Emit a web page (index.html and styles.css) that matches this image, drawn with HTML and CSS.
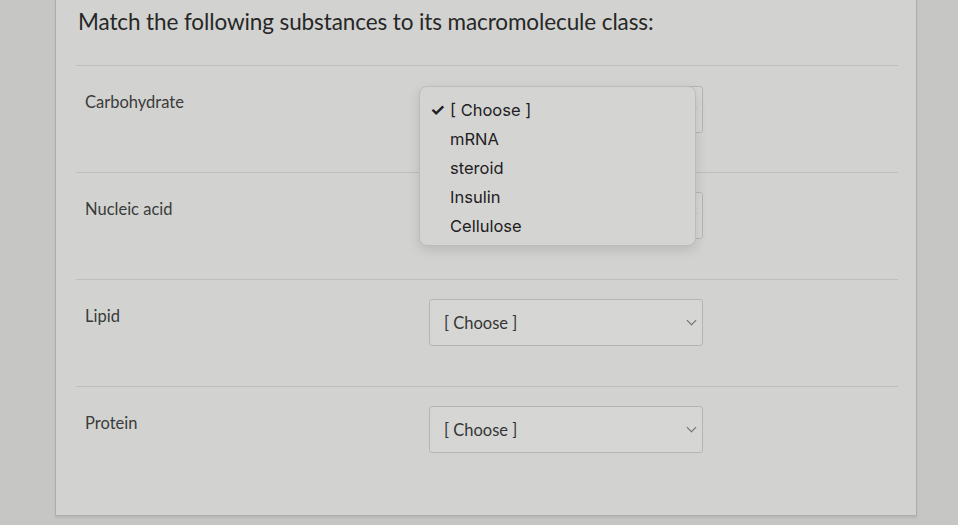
FILE: index.html
```html
<!DOCTYPE html>
<html lang="en">
<head>
    <meta charset="UTF-8">
    <meta name="viewport" content="width=device-width, initial-scale=1.0">
    <title>Matching question</title>
    <link rel="stylesheet" href="styles.css">
</head>
<body>
    <div class="page">
        <div class="question-card">
            <p class="question-text">Match the following substances to its macromolecule class:</p>

            <div class="answers">
                <div class="answer-row first-row">
                    <div class="answer-label">Carbohydrate</div>
                    <div class="answer-select"><span></span><span class="chevron"></span></div>

                    <!-- open list of the first select, drawn over the rows below -->
                    <ul class="dropdown-menu">
                        <li class="selected"><span class="check">✓</span>[ Choose ]</li>
                        <li>mRNA</li>
                        <li>steroid</li>
                        <li>Insulin</li>
                        <li>Cellulose</li>
                    </ul>
                </div>

                <div class="answer-row">
                    <div class="answer-label">Nucleic acid</div>
                    <div class="answer-select"><span></span><span class="chevron"></span></div>
                </div>

                <div class="answer-row">
                    <div class="answer-label">Lipid</div>
                    <div class="answer-select"><span>[ Choose ]</span><span class="chevron"></span></div>
                </div>

                <div class="answer-row">
                    <div class="answer-label">Protein</div>
                    <div class="answer-select"><span>[ Choose ]</span><span class="chevron"></span></div>
                </div>
            </div>
        </div>
    </div>
</body>
</html>
```

FILE: styles.css
```css
* {
    margin: 0;
    padding: 0;
    box-sizing: border-box;
}

body {
    font-family: Lato, "Liberation Sans", sans-serif;
    background: #c6c7c5;
    color: #2d2e2d;
    width: 958px;
    height: 525px;
    overflow: hidden;
}

.page {
    padding-left: 55px;
}

.question-card {
    width: 862px;
    height: 516px;
    background: #d2d3d1;
    border: 1px solid #aeafad;
    border-top: none;
    box-shadow: 0 2px 2px rgba(0, 0, 0, 0.08);
}

.question-text {
    font-size: 22.5px;
    line-height: 26px;
    padding: 9px 0 0 22px;
    height: 65px;
    color: #262726;
    letter-spacing: -0.1px;
}

.answers {
    margin: 0 18px 0 20px;
}

.answer-row {
    position: relative;
    display: flex;
    height: 107px;
    border-top: 1px solid #bebfbd;
}

.answer-row:last-child {
    height: 106px;
}

.answer-label {
    width: 353px;
    padding: 26px 0 0 9px;
    font-size: 16.5px;
    color: #3a3b3a;
}

.answer-select {
    margin-top: 19px;
    width: 274px;
    height: 47px;
    border: 1px solid #b5b6b4;
    border-radius: 3px;
    background: #d6d7d5;
    display: flex;
    align-items: center;
    justify-content: space-between;
    padding: 0 7px 0 14px;
    font-size: 16.5px;
    color: #353635;
}

.first-row .answer-select {
    margin-top: 20px;
}

.chevron {
    width: 7px;
    height: 7px;
    border-right: 1.3px solid #6a6b6a;
    border-bottom: 1.3px solid #6a6b6a;
    transform: rotate(45deg);
    margin-top: -4px;
}

.dropdown-menu {
    position: absolute;
    left: 343px;
    top: 20px;
    width: 277px;
    height: 160px;
    list-style: none;
    background: #d4d5d3;
    border: 1px solid #bcbdbb;
    border-radius: 8px;
    box-shadow: 0 4px 12px rgba(0, 0, 0, 0.12);
    padding: 9px 0 0 30px;
    font-family: Inter, "Noto Sans", sans-serif;
    font-size: 16.5px;
    color: #1f201f;
    z-index: 2;
}

.dropdown-menu li {
    position: relative;
    height: 29px;
    line-height: 29px;
}

.check {
    position: absolute;
    left: -20px;
    font-size: 17px;
    font-weight: 700;
}
```
